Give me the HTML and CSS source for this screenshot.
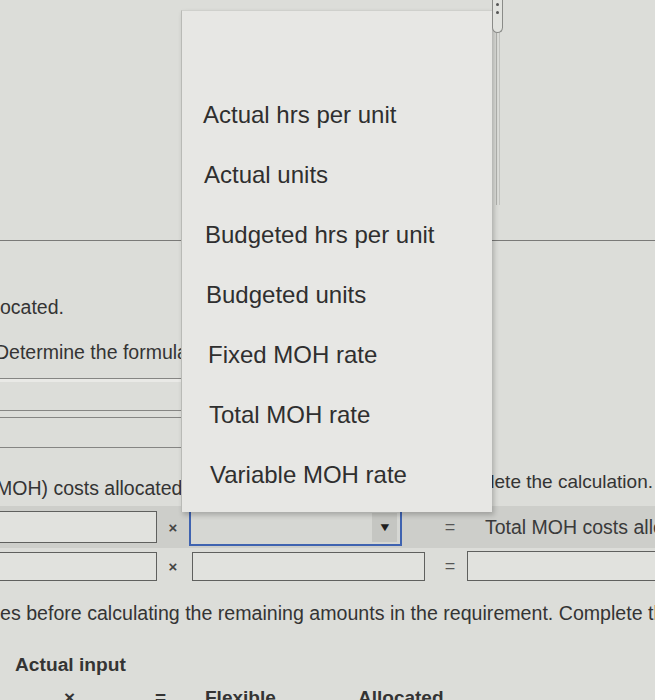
FILE: index.html
```html
<!DOCTYPE html>
<html lang="en">
<head>
<meta charset="utf-8">
<title>MOH costs allocated</title>
<link rel="stylesheet" href="styles.css">
</head>
<body>
<div class="page">
  <div class="top-rule"></div>
  <p class="line t-ocated">ocated.</p>
  <p class="line t-determine">Determine the formula</p>
  <div class="formula-lines">
    <div class="fl fl-a"></div>
    <div class="fl fl-b"></div>
    <div class="fl fl-c"></div>
    <div class="fl fl-d"></div>
  </div>
  <div class="line split">
    <span class="left-text">MOH) costs allocated.</span>
    <span class="right-text">lete the calculation.</span>
  </div>
  <div class="calc">
    <div class="calc-row active">
      <div class="box box-first"></div>
      <span class="op">×</span>
      <div class="select"><span class="arrow-box"><span class="arrow">▼</span></span></div>
      <span class="op eq eq-first">=</span>
      <span class="result-label">Total MOH costs allocated</span>
    </div>
    <div class="calc-row">
      <div class="box box-first box-r2"></div>
      <span class="op">×</span>
      <div class="box box-mid"></div>
      <span class="op eq eq-second">=</span>
      <div class="box box-last"></div>
    </div>
  </div>
  <p class="line note">es before calculating the remaining amounts in the requirement. Complete the table below.</p>
  <p class="line strong actual">Actual input</p>
  <div class="bottom-row">
    <span class="b-x">×</span>
    <span class="b-eq">=</span>
    <span class="b-flex">Flexible</span>
    <span class="b-alloc">Allocated</span>
  </div>
</div>

<div class="dropdown">
  <ul class="options">
    <li class="opt">Actual hrs per unit</li>
    <li class="opt">Actual units</li>
    <li class="opt">Budgeted hrs per unit</li>
    <li class="opt">Budgeted units</li>
    <li class="opt">Fixed MOH rate</li>
    <li class="opt">Total MOH rate</li>
    <li class="opt">Variable MOH rate</li>
  </ul>
</div>
<div class="scrollbar">
  <div class="thumb"><span class="dot"></span><span class="dot"></span></div>
  <div class="track"></div>
</div>
</body>
</html>
```
FILE: styles.css
```css
html, body {
  margin: 0;
  padding: 0;
}
body {
  width: 655px;
  height: 700px;
  overflow: hidden;
  position: relative;
  background: #dcddd9;
  font-family: "Liberation Sans", Arial, sans-serif;
  font-size: 19.5px;
  color: #343434;
}
.page {
  padding-top: 240px;
}
.top-rule {
  height: 0;
  border-top: 1.5px solid #7a7a78;
}
.line {
  margin: 0;
  height: 24px;
  line-height: 24px;
  white-space: nowrap;
}
.t-ocated {
  margin-top: 54px;
}
.t-determine {
  margin-top: 21px;
  margin-left: -5px;
}
.formula-lines {
  box-sizing: border-box;
  height: 110px;
  width: 320px;
  padding-top: 14px;
}
.fl {
  border-top: 1.5px solid #858583;
}
.fl-a {
  border-bottom: 3px solid #e9e9e6;
}
.fl-b {
  margin-top: 28px;
}
.fl-c {
  margin-top: 6px;
}
.fl-d {
  margin-top: 29px;
}
.split {
  display: flex;
  justify-content: space-between;
}
.split .left-text {
  margin-left: -4px;
  transform: translateY(2px);
}
.split .right-text {
  margin-right: 2px;
  transform: translateY(-4px);
  font-size: 19px;
}
.calc {
  margin-top: 8px;
}
.calc-row {
  display: flex;
  align-items: center;
  height: 36px;
}
.calc-row.active {
  height: 42px;
  background: #cdceca;
}
.box {
  box-sizing: border-box;
  border: 1.5px solid #5f605e;
  background: #e1e2de;
  flex: none;
}
.box-first {
  margin-left: -5px;
  width: 162px;
  height: 32px;
}
.box-r2 {
  height: 29px;
}
.op {
  flex: none;
  width: 32px;
  text-align: center;
  font-size: 15px;
  font-weight: bold;
  color: #444;
}
.select {
  flex: none;
  box-sizing: border-box;
  width: 213px;
  height: 37px;
  border: 2.5px solid #3f63b0;
  background: #d6d7d3;
  display: flex;
  justify-content: flex-end;
  align-items: stretch;
  padding: 2px 3px;
}
.arrow-box {
  width: 25px;
  background: #c5c6c2;
  display: flex;
  align-items: center;
  justify-content: center;
}
.arrow {
  font-size: 12px;
  color: #1e1e1e;
  transform: scaleX(1.2);
}
.eq {
  font-weight: normal;
  font-size: 18px;
  color: #555;
}
.eq-first {
  margin-left: 32px;
}
.result-label {
  margin-left: 19px;
  white-space: nowrap;
  font-size: 19.5px;
  color: #3a3a3a;
}
.box-mid {
  margin-left: 3px;
  width: 233px;
  height: 29px;
}
.eq-second {
  margin-left: 9px;
}
.box-last {
  margin-left: 1px;
  width: 200px;
  height: 30px;
}
.note {
  margin-top: 17px;
  font-size: 19.6px;
}
.strong {
  font-weight: bold;
}
.actual {
  margin-top: 28px;
  margin-left: 15px;
  font-size: 19.2px;
}
.bottom-row {
  position: relative;
  margin-top: 10px;
  height: 30px;
  font-weight: bold;
  font-size: 19px;
  white-space: nowrap;
}
.bottom-row span {
  position: absolute;
  top: 0;
}
.b-x { left: 64px; top: 4px; }
.b-eq { left: 155px; top: 4px; }
.b-flex { left: 205px; top: 3px; }
.b-alloc { left: 358px; top: 0; }

/* dropdown list overlay */
.dropdown {
  position: absolute;
  left: 181px;
  top: 10px;
  width: 311px;
  height: 502px;
  box-sizing: border-box;
  background: #e7e7e4;
  border-left: 1px solid #b9bab6;
  border-top: 1px solid #cfd0cc;
  box-shadow: 2px 3px 5px rgba(0, 0, 0, 0.22);
}
.options {
  list-style: none;
  margin: 0;
  padding: 74px 0 0 21px;
}
.opt {
  height: 60px;
  line-height: 60px;
  font-size: 24px;
  color: #2f2f2f;
  white-space: nowrap;
}
.opt:nth-child(2) { padding-left: 1px; }
.opt:nth-child(3) { padding-left: 2px; }
.opt:nth-child(4) { padding-left: 3px; }
.opt:nth-child(5) { padding-left: 5px; }
.opt:nth-child(6) { padding-left: 6px; }
.opt:nth-child(7) { padding-left: 7px; }

.scrollbar {
  position: absolute;
  left: 492px;
  top: 0;
  width: 11px;
}
.thumb {
  box-sizing: border-box;
  height: 33px;
  border: 1.5px solid #8a8b88;
  border-top: none;
  border-radius: 0 0 6px 6px;
  background: #e2e3df;
  display: flex;
  flex-direction: column;
  align-items: center;
  gap: 5px;
  padding-top: 3px;
}
.dot {
  width: 3px;
  height: 3px;
  border-radius: 50%;
  background: #555;
}
.track {
  margin: 0 auto;
  width: 2px;
  height: 172px;
  border-left: 1px solid #a9aaa6;
  border-right: 1px solid #c2c3bf;
}
```
